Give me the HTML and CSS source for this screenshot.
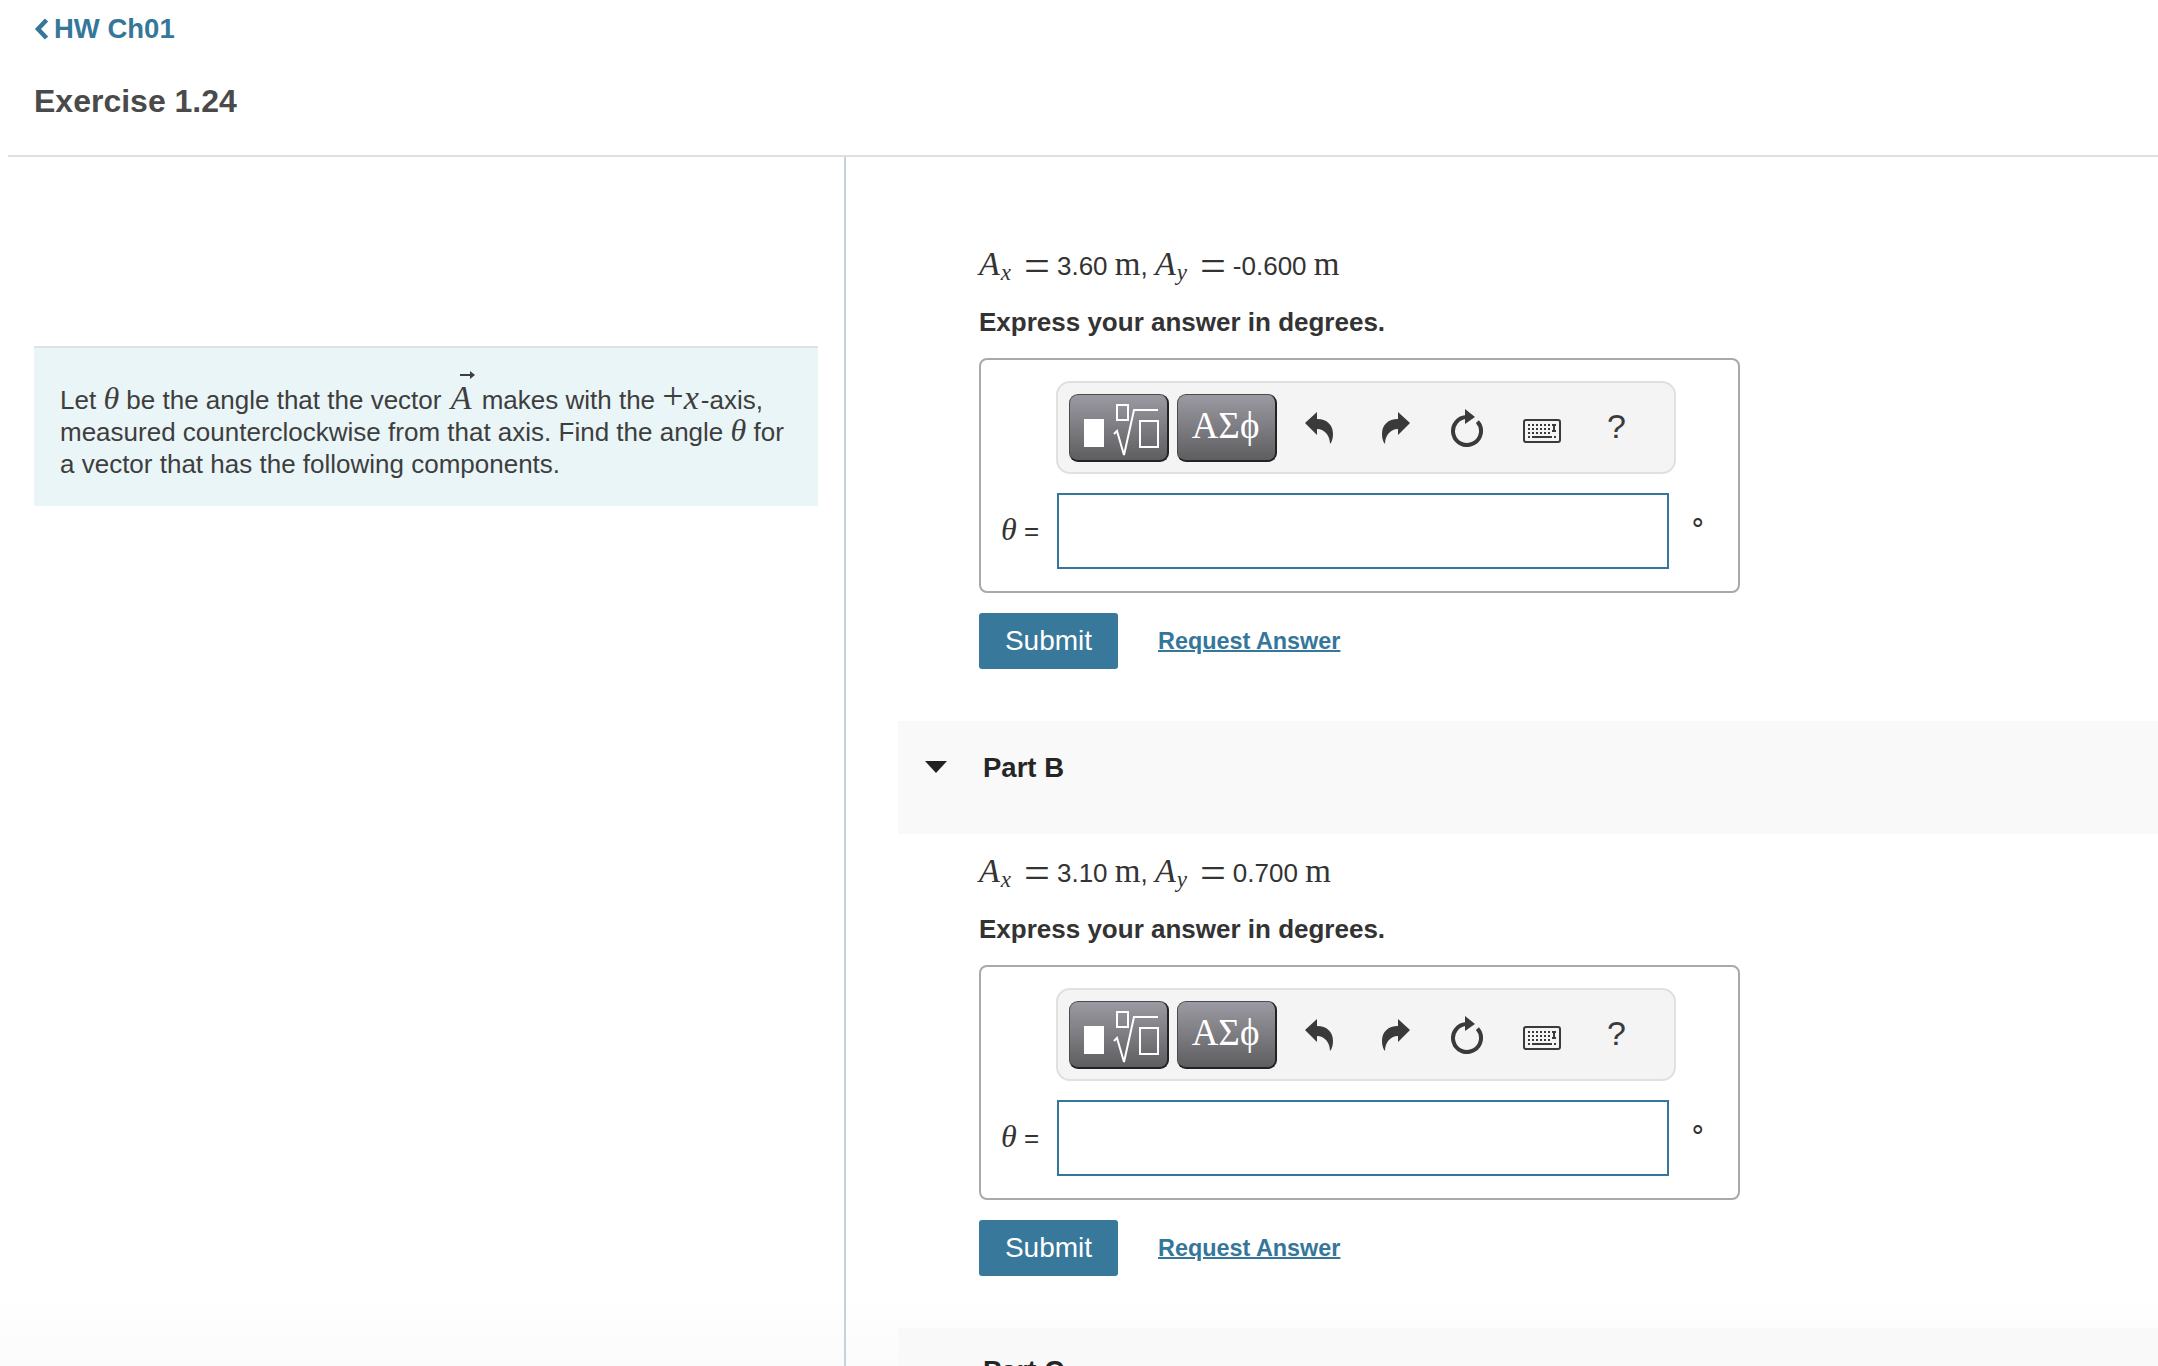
FILE: index.html
```html
<!DOCTYPE html>
<html lang="en">
<head>
<meta charset="utf-8">
<title>Exercise 1.24</title>
<link rel="stylesheet" href="styles.css">
</head>
<body>
<svg class="defs" width="0" height="0" aria-hidden="true">
  <symbol id="i-undo" viewBox="0 0 30 34"><path d="M1 12 L13 1 V8 C23 8 29 14 29 23 C29 27 28 31 26 33 C26 25 21 18 13 18 V24 Z"/></symbol>
  <symbol id="i-redo" viewBox="0 0 30 34"><path d="M29 12 L17 1 V8 C7 8 1 14 1 23 C1 27 2 31 4 33 C4 25 9 18 17 18 V24 Z"/></symbol>
  <symbol id="i-refresh" viewBox="0 0 34 38"><path class="ring" d="M17 8 A14 14 0 1 0 27.4 12.6"/><path d="M15 0 L25 8 L15 15 Z"/></symbol>
  <symbol id="i-keys" viewBox="0 0 38 24">
    <rect class="key-case" x="1" y="1" width="36" height="22" rx="2"/>
    <path class="key-dots" d="M5 6h2M9 6h2M13 6h2M17 6h2M21 6h2M25 6h2M29 6h4M5 10h2M9 10h2M13 10h2M17 10h2M21 10h2M25 10h2M31 6v6M29 12h4M5 14h2M9 14h2M13 14h2M17 14h2M21 14h2M25 14h2M5 18h2M9 18h20M31 18h2"/>
  </symbol>
  <symbol id="i-templates" viewBox="0 0 100 68">
    <rect class="t-fill" x="15" y="26" width="20" height="28"/>
    <rect class="t-line" x="48" y="12" width="11" height="15"/>
    <path class="t-line" d="M45 41 L48 38 L55 62 L65 17 H89"/>
    <rect class="t-line" x="71" y="28" width="18" height="26"/>
  </symbol>
</svg>
<header class="topbar">
  <a class="back" href="#"><svg class="back-icon" viewBox="0 0 15 22"><path d="M12.5 2 L4 11 L12.5 20"/></svg>HW Ch01</a>
  <h1 class="title">Exercise 1.24</h1>
</header>
<main class="layout">
  <aside class="intro-col">
    <div class="intro">
      Let <i class="sym theta">θ</i> be the angle that the vector <span class="vec"><i class="sym">A</i></span> makes with the <span class="serif plus">+</span><i class="sym ex">x</i>-axis, measured counterclockwise from that axis. Find the angle <i class="sym theta">θ</i> for a vector that has the following components.
    </div>
  </aside>
  <section class="work-col">
    <div class="part first">
      <p class="math"><i class="sym">A<sub>x</sub></i><span class="eq">=</span>3.60 <span class="serif">m</span>, <i class="sym">A<sub>y</sub></i><span class="eq">=</span>-0.600 <span class="serif">m</span></p>
      <p class="prompt">Express your answer in degrees.</p>
      <div class="answer">
        <div class="toolbar">
          <button class="tool"><svg class="t-svg"><use href="#i-templates"/></svg></button>
          <button class="tool greek">ΑΣϕ</button>
          <svg class="ic ic-undo"><use href="#i-undo"/></svg>
          <svg class="ic ic-redo"><use href="#i-redo"/></svg>
          <svg class="ic ic-refresh"><use href="#i-refresh"/></svg>
          <svg class="ic ic-keys"><use href="#i-keys"/></svg>
          <span class="help">?</span>
        </div>
        <div class="entry">
          <span class="label"><i class="sym">θ</i> =</span>
          <div class="field"></div>
          <span class="unit">∘</span>
        </div>
      </div>
      <div class="actions">
        <button class="submit">Submit</button>
        <a class="request" href="#">Request Answer</a>
      </div>
    </div>
    <div class="band">
      <svg class="caret" viewBox="0 0 22 12"><path d="M0 0 H22 L11 12 Z"/></svg>
      <h2 class="part-name">Part B</h2>
    </div>
    <div class="part">
      <p class="math"><i class="sym">A<sub>x</sub></i><span class="eq">=</span>3.10 <span class="serif">m</span>, <i class="sym">A<sub>y</sub></i><span class="eq">=</span>0.700 <span class="serif">m</span></p>
      <p class="prompt">Express your answer in degrees.</p>
      <div class="answer">
        <div class="toolbar">
          <button class="tool"><svg class="t-svg"><use href="#i-templates"/></svg></button>
          <button class="tool greek">ΑΣϕ</button>
          <svg class="ic ic-undo"><use href="#i-undo"/></svg>
          <svg class="ic ic-redo"><use href="#i-redo"/></svg>
          <svg class="ic ic-refresh"><use href="#i-refresh"/></svg>
          <svg class="ic ic-keys"><use href="#i-keys"/></svg>
          <span class="help">?</span>
        </div>
        <div class="entry">
          <span class="label"><i class="sym">θ</i> =</span>
          <div class="field"></div>
          <span class="unit">∘</span>
        </div>
      </div>
      <div class="actions">
        <button class="submit">Submit</button>
        <a class="request" href="#">Request Answer</a>
      </div>
    </div>
    <div class="band last">
      <h2 class="part-name">Part C</h2>
    </div>
  </section>
</main>
</body>
</html>
```

FILE: styles.css
```css
* { box-sizing: border-box; }
html, body { height: 100%; }
body {
  margin: 0;
  height: 1366px;
  overflow: hidden;
  background: #fff;
  color: #3c3c3c;
  font-family: "Liberation Sans", Arial, sans-serif;
  font-size: 26px;
  line-height: 32px;
  display: flex;
  flex-direction: column;
}
.defs { position: absolute; }
.topbar {
  height: 157px;
  margin-left: 8px;
  padding: 13px 0 0 26px;
  border-bottom: 2px solid #dfdfe1;
  flex: none;
}
.back {
  display: flex;
  align-items: center;
  gap: 5px;
  height: 32px;
  color: #35779a;
  font-size: 27.5px;
  font-weight: 700;
  text-decoration: none;
}
.back-icon {
  width: 15px;
  height: 22px;
  fill: none;
  stroke: #35779a;
  stroke-width: 4.5;
}
.title {
  margin: 36px 0 0;
  font-size: 32px;
  line-height: 40px;
  font-weight: 700;
  color: #4a4a4a;
}
.layout {
  flex: 1;
  display: flex;
  min-height: 0;
  background: linear-gradient(transparent calc(100% - 70px), #fbfbfb);
}
.intro-col {
  width: 846px;
  flex: none;
  padding: 189px 26px 0 34px;
  border-right: 2px solid #c5d1de;
}
.intro {
  height: 160px;
  padding: 36px 26px 0;
  background: #e9f5f7;
  border-top: 2px solid #dde2e4;
  color: #3e3e3e;
  font-size: 26px;
}
.sym { font-family: "Liberation Serif", serif; font-style: italic; line-height: 0; }
.serif { font-family: "Liberation Serif", serif; line-height: 0; }
.theta { font-size: 32px; }
.plus { font-size: 38px; }
.ex { font-size: 34px; margin-right: 2px; }
.vec { position: relative; display: inline-block; margin: 0 3px 0 2px; font-size: 34px; line-height: 0; }
.vec::before {
  content: "";
  position: absolute;
  left: 9px;
  top: -23px;
  width: 14px;
  height: 2px;
  background: #3e3e3e;
}
.vec::after {
  content: "";
  position: absolute;
  left: 19px;
  top: -26px;
  border-left: 5px solid #3e3e3e;
  border-top: 4px solid transparent;
  border-bottom: 4px solid transparent;
}
.work-col { flex: 1; min-width: 0; padding: 0 0 0 52px; }
.part { padding-left: 81px; }
.first { padding-top: 92px; }
.math {
  margin: 0;
  height: 32px;
  padding-top: 1px;
  font-size: 26px;
  color: #333;
}
.math .sym { font-size: 34px; }
.math sub { font-size: 23px; line-height: 0; vertical-align: -5px; margin-left: 1px; }
.math .serif { font-size: 33px; }
.eq {
  display: inline-block;
  margin: 0 7px 0 13px;
  font-family: "Liberation Serif", serif;
  font-size: 46px;
  line-height: 0;
  vertical-align: -6px;
  font-weight: 400;
}
.prompt {
  margin: 25px 0 0;
  font-weight: 700;
  color: #333;
}
.answer {
  width: 761px;
  height: 235px;
  margin-top: 20px;
  padding: 21px 0 0 75px;
  border: 2px solid #a9a9a9;
  border-radius: 8px;
}
.toolbar {
  width: 620px;
  height: 93px;
  display: flex;
  align-items: center;
  padding-left: 11px;
  background: #f4f4f4;
  border: 2px solid #e0e0e0;
  border-radius: 14px;
}
.tool {
  width: 100px;
  height: 68px;
  margin-right: 8px;
  padding: 0;
  display: flex;
  align-items: center;
  justify-content: center;
  background: linear-gradient(#9b9aa3, #5e5e60);
  border: 1px solid #4b4b4d;
  border-bottom: 2px solid #232325;
  border-right: 2px solid #232325;
  border-radius: 9px;
  color: #fff;
}
.greek {
  font-family: "Liberation Serif", serif;
  font-size: 37px;
  padding: 0 2px 4px 0;
}
.t-svg { width: 100px; height: 68px; flex: none; overflow: visible; }
.t-fill { fill: #fff; }
.t-line { fill: none; stroke: #fff; stroke-width: 2; }
.ic { fill: #3a3a3a; flex: none; }
.ic-undo { width: 30px; height: 34px; margin-left: 19px; }
.ic-redo { width: 30px; height: 34px; margin-left: 47px; }
.ic-refresh { width: 34px; height: 38px; margin-left: 39px; }
.ring { fill: none; stroke: #3a3a3a; stroke-width: 4; }
.ic-keys { width: 38px; height: 24px; margin-left: 39px; margin-top: 6px; }
.key-case { fill: #f4f4f4; stroke: #3a3a3a; stroke-width: 2; }
.key-dots { fill: none; stroke: #3a3a3a; stroke-width: 2; }
.help { margin-left: 46px; padding-bottom: 3px; font-size: 34px; color: #3a3a3a; }
.entry { display: flex; align-items: flex-start; margin-top: 19px; margin-left: -55px; }
.label { width: 55px; padding-top: 22px; white-space: nowrap; color: #333; }
.label .sym { font-size: 32px; }
.field {
  width: 612px;
  height: 76px;
  margin-left: 1px;
  border: 2px solid #35779a;
  background: #fff;
}
.unit { margin-left: 20px; padding-top: 12px; font-size: 28px; color: #333; }
.actions { display: flex; align-items: center; margin-top: 20px; }
.submit {
  width: 139px;
  height: 56px;
  padding: 0;
  background: #37789b;
  border: 0;
  border-radius: 3px;
  color: #fff;
  font-family: "Liberation Sans", sans-serif;
  font-size: 28px;
}
.request {
  margin-left: 40px;
  color: #35779a;
  font-size: 23.4px;
  font-weight: 700;
  text-decoration-thickness: 2px;
}
.band {
  height: 113px;
  margin-top: 52px;
  padding-top: 31px;
  display: flex;
  align-items: flex-start;
  background: #f9f9f9;
}
.band .part-name { margin: 0 0 0 36px; }
.caret { width: 22px; height: 12px; fill: #222; margin: 9px 0 0 27px; flex: none; }
.part-name {
  font-size: 27.5px;
  line-height: 32px;
  font-weight: 700;
  color: #252525;
}
.band + .part { padding-top: 22px; }
.band.last { padding: 27px 0 0 47px; height: 60px; margin-top: 52px; }
.band.last .part-name { margin: 0 0 0 38px; }
```
